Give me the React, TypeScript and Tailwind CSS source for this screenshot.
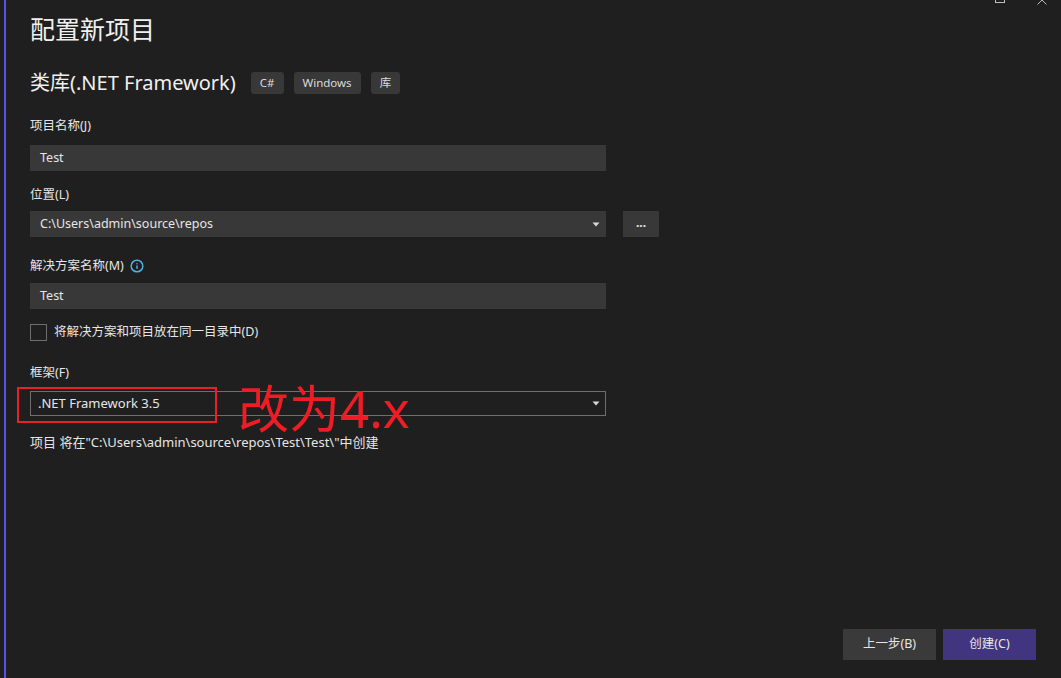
import { Info } from "lucide-react";

const FONT = {
  fontFamily: '"Noto Sans", "Noto Sans CJK SC", sans-serif',
};

function Caret() {
  return (
    <svg width="8" height="5" viewBox="0 0 8 5" className="shrink-0">
      <path d="M0.5 0.5 H7.5 L4 4.5 Z" fill="#d8d8d8" />
    </svg>
  );
}

function Field({ value, dropdown }: { value: string; dropdown?: boolean }) {
  return (
    <div className="flex h-[26px] w-[576px] items-center justify-between bg-[#383838] pl-[10px] pr-[6px] text-[12.5px] text-[#e6e6e6]">
      <span>{value}</span>
      {dropdown && <Caret />}
    </div>
  );
}

function Tag({ children }: { children: string }) {
  return (
    <span className="flex h-[22px] items-center rounded-[3px] bg-[#383838] px-[9px] text-[11.5px] text-[#dcdcdc]">
      {children}
    </span>
  );
}

export default function App() {
  return (
    <div
      className="relative flex h-[678px] w-[1061px] overflow-hidden bg-[#1f1f1f] text-[#e6e6e6]"
      style={FONT}
    >
      <div className="ml-[4px] h-full w-[2px] bg-[#5b50e8]" />

      {/* window controls cut off at the top edge */}
      <div className="absolute left-[995px] top-[-8px] h-[11px] w-[10px] border border-[#bdbdbd]" />
      <svg className="absolute left-[1037px] top-[-5px]" width="10" height="10" viewBox="0 0 10 10">
        <path d="M0.5 0.5 L9.5 9.5 M9.5 0.5 L0.5 9.5" stroke="#bdbdbd" strokeWidth="1" />
      </svg>

      <div className="flex flex-1 flex-col pl-[24px] pt-[11px]">
        <h1 className="text-[25px] leading-[36px] text-[#f0f0f0]">配置新项目</h1>

        <div className="mt-[22px] flex items-center gap-[10px]">
          <h2 className="mr-[5px] text-[20px] leading-[28px] text-[#f0f0f0]">类库(.NET Framework)</h2>
          <Tag>C#</Tag>
          <Tag>Windows</Tag>
          <Tag>库</Tag>
        </div>

        <label className="mt-[20px] text-[12.5px] leading-[18px]">项目名称(J)</label>
        <div className="mt-[10px]">
          <Field value="Test" />
        </div>

        <label className="mt-[15px] text-[12.5px] leading-[18px]">位置(L)</label>
        <div className="mt-[7px] flex items-center gap-[17px]">
          <Field value="C:\Users\admin\source\repos" dropdown />
          <button className="flex h-[26px] w-[36px] items-center justify-center bg-[#383838] pb-[2px] text-[12px] font-bold text-[#e6e6e6]">
            ...
          </button>
        </div>

        <div className="mt-[20px] flex items-center gap-[6px] text-[12.5px] leading-[18px]">
          <span>解决方案名称(M)</span>
          <Info size={14} strokeWidth={2.5} className="text-[#4fb3e8]" />
        </div>
        <div className="mt-[8px]">
          <Field value="Test" />
        </div>

        <div className="mt-[14px] flex items-center gap-[7px] text-[12.5px] leading-[18px]">
          <span className="h-[17px] w-[17px] border border-[#6e6e6e]" />
          <span>将解决方案和项目放在同一目录中(D)</span>
        </div>

        <label className="mt-[23px] text-[12.5px] leading-[18px]">框架(F)</label>
        <div className="mt-[9px] flex h-[25px] w-[576px] items-center justify-between border border-[#6e6e6e] pl-[7px] pr-[5px] text-[13px]">
          <span>.NET Framework 3.5</span>
          <Caret />
        </div>

        <p className="mt-[17px] text-[13px] leading-[18px]">
          项目 将在"C:\Users\admin\source\repos\Test\Test\"中创建
        </p>

        <div className="mt-auto mb-[18px] flex justify-end gap-[7px] pr-[25px]">
          <button className="h-[31px] w-[93px] bg-[#3a3a3a] text-[12.5px] text-[#e6e6e6]">上一步(B)</button>
          <button className="h-[31px] w-[93px] bg-[#41357f] text-[12.5px] text-[#e6e6e6]">创建(C)</button>
        </div>
      </div>

      {/* red annotation drawn over the screenshot */}
      <div className="absolute left-[17px] top-[387px] h-[36px] w-[200px] border-2 border-[#e8202a]" />
      <span className="absolute left-[238px] top-[386px] text-[51px] leading-[44px] text-[#ee1c25]">改为4.x</span>
    </div>
  );
}
